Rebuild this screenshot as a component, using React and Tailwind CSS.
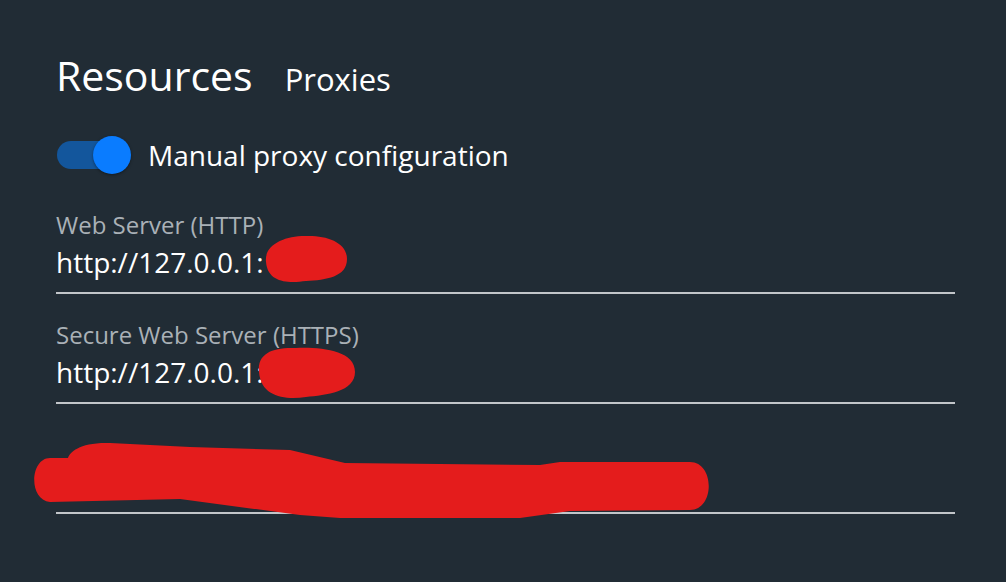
import React from "react";

function Field({ label, value }) {
  return (
    <div className="flex flex-col h-[110px] pt-[26px]">
      <div className="text-[24px] leading-[30px] h-[30px] text-[#aab1b7]">{label}</div>
      <div className="mt-[3px] text-[28px] leading-[38px] text-white h-[38px]">{value}</div>
      <div className="mt-[11px] h-[2px] bg-[#c2c6ca]" />
    </div>
  );
}

export default function App() {
  return (
    <div
      className="relative w-[1006px] h-[582px] bg-[#212c35] overflow-hidden"
      style={{ fontFamily: '"Open Sans", "Noto Sans", sans-serif' }}
    >
      <div className="w-[899px] ml-[56px] pt-[49px]">
        <div className="flex items-baseline gap-[32px] h-[52px]">
          <h1 className="text-[41px] leading-[52px] text-white">Resources</h1>
          <h2 className="text-[31px] leading-[40px] text-white">Proxies</h2>
        </div>
        <div className="flex items-center mt-[34px] h-[40px]">
          <div className="relative w-[75px] h-[40px] flex items-center">
            <div className="w-[64px] h-[28px] rounded-full bg-[#13569c] ml-[1px]" />
            <div className="absolute right-0 top-[1px] w-[38px] h-[38px] rounded-full bg-[#0a7cff] shadow-[0_1px_3px_rgba(0,0,0,0.4)]" />
          </div>
          <span className="ml-[17px] text-[28px] leading-[38px] text-white">
            Manual proxy configuration
          </span>
        </div>
        <div className="mt-[9px]">
          <Field label="Web Server (HTTP)" value="http://127.0.0.1:" />
          <Field label="Secure Web Server (HTTPS)" value="http://127.0.0.1:" />
          <Field label="" value="" />
        </div>
      </div>
      <svg
        className="absolute inset-0 pointer-events-none"
        width="1006"
        height="582"
        viewBox="0 0 1006 582"
      >
        <g fill="#e41c1c">
          <path d="M 266 262 C 264 245 284 236 305 236 C 326 235 347 242 347 259 C 347 277 326 280 306 281 C 290 283 268 284 266 262 Z" />
          <path d="M 259 372 C 257 352 275 347 296 348 C 320 347 355 350 355 372 C 355 392 326 395 306 397 C 285 400 261 397 259 372 Z" />
          <path
            d="M50 458 C 30 458 28 500 50 502 L 180 499 L 300 515 L 340 518 L 520 518 L 570 511 L 690 510 C 715 510 715 462 690 462 L 560 462 L 540 465 L 345 463 L 290 450 L 190 447 L 110 443 C 80 442 70 452 68 458 Z"
          />
        </g>
      </svg>
    </div>
  );
}
